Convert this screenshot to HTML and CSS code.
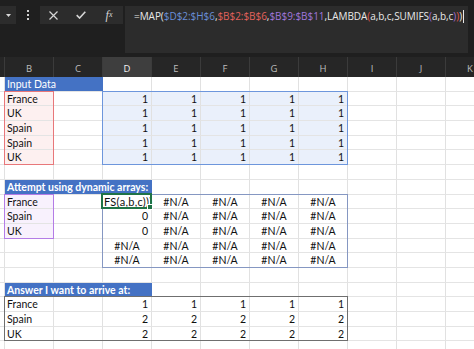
FILE: index.html
```html
<!DOCTYPE html>
<html>
<head>
<meta charset="utf-8">
<link rel="stylesheet" href="styles.css">
</head>
<body>
<div class="app">
  <div class="topbar">
    <div class="namebox"><svg width="5" height="3" viewBox="0 0 5 3"><path d="M0 0h5L2.5 3z" fill="#d8d8d8"/></svg></div>
    <div class="dots"><i></i><i></i><i></i></div>
    <div class="cmds">
      <span class="slot"><svg width="9" height="9" viewBox="0 0 9 9"><path d="M0.5 0.5L8.5 8.5M8.5 0.5L0.5 8.5" stroke="#d6d6d6" stroke-width="1.2" fill="none"/></svg></span>
      <span class="slot"><svg width="10" height="8" viewBox="0 0 10 8"><path d="M0.7 4.2L3.6 7L9.3 0.8" stroke="#d6d6d6" stroke-width="1.6" fill="none"/></svg></span>
      <span class="slot fx"><i>f</i><sub>x</sub></span>
    </div>
    <div class="formula"><span>=MAP(</span><span class="rb">$D$2:$H$6</span>,<span class="rr">$B$2:$B$6</span>,<span class="rp">$B$9:$B$11</span>,LAMBDA<span class="pr">(</span>a,b,c,SUMIFS<span class="pp">(</span>a,b,c<span class="pp">)</span><span class="pr">)</span>)<span class="cursor"></span></div>
  </div>
  <div class="sheet">
    <div class="layer cells">
      <div class="h"></div><div class="h">B</div><div class="h">C</div><div class="h sel">D</div><div class="h">E</div><div class="h">F</div><div class="h">G</div><div class="h">H</div><div class="h">I</div><div class="h">J</div><div class="h">K</div>

      <div class="c"></div><div class="c title s2">Input Data</div><div class="c"></div><div class="c"></div><div class="c"></div><div class="c"></div><div class="c"></div><div class="c"></div><div class="c"></div><div class="c"></div>

      <div class="c"></div><div class="c fr">France</div><div class="c"></div><div class="c fb r">1</div><div class="c fb r">1</div><div class="c fb r">1</div><div class="c fb r">1</div><div class="c fb r">1</div><div class="c"></div><div class="c"></div><div class="c"></div>
      <div class="c"></div><div class="c fr">UK</div><div class="c"></div><div class="c fb r">1</div><div class="c fb r">1</div><div class="c fb r">1</div><div class="c fb r">1</div><div class="c fb r">1</div><div class="c"></div><div class="c"></div><div class="c"></div>
      <div class="c"></div><div class="c fr">Spain</div><div class="c"></div><div class="c fb r">1</div><div class="c fb r">1</div><div class="c fb r">1</div><div class="c fb r">1</div><div class="c fb r">1</div><div class="c"></div><div class="c"></div><div class="c"></div>
      <div class="c"></div><div class="c fr">Spain</div><div class="c"></div><div class="c fb r">1</div><div class="c fb r">1</div><div class="c fb r">1</div><div class="c fb r">1</div><div class="c fb r">1</div><div class="c"></div><div class="c"></div><div class="c"></div>
      <div class="c"></div><div class="c fr">UK</div><div class="c"></div><div class="c fb r">1</div><div class="c fb r">1</div><div class="c fb r">1</div><div class="c fb r">1</div><div class="c fb r">1</div><div class="c"></div><div class="c"></div><div class="c"></div>

      <div class="c"></div><div class="c"></div><div class="c"></div><div class="c"></div><div class="c"></div><div class="c"></div><div class="c"></div><div class="c"></div><div class="c"></div><div class="c"></div><div class="c"></div>

      <div class="c"></div><div class="c title bold s3">Attempt using dynamic arrays:</div><div class="c"></div><div class="c"></div><div class="c"></div><div class="c"></div><div class="c"></div><div class="c"></div><div class="c"></div>

      <div class="c"></div><div class="c fp">France</div><div class="c"></div><div class="c edit">FS(a,b,c)))</div><div class="c m">#N/A</div><div class="c m">#N/A</div><div class="c m">#N/A</div><div class="c m">#N/A</div><div class="c"></div><div class="c"></div><div class="c"></div>
      <div class="c"></div><div class="c fp">Spain</div><div class="c"></div><div class="c r">0</div><div class="c m">#N/A</div><div class="c m">#N/A</div><div class="c m">#N/A</div><div class="c m">#N/A</div><div class="c"></div><div class="c"></div><div class="c"></div>
      <div class="c"></div><div class="c fp">UK</div><div class="c"></div><div class="c r">0</div><div class="c m">#N/A</div><div class="c m">#N/A</div><div class="c m">#N/A</div><div class="c m">#N/A</div><div class="c"></div><div class="c"></div><div class="c"></div>
      <div class="c"></div><div class="c"></div><div class="c"></div><div class="c m">#N/A</div><div class="c m">#N/A</div><div class="c m">#N/A</div><div class="c m">#N/A</div><div class="c m">#N/A</div><div class="c"></div><div class="c"></div><div class="c"></div>
      <div class="c"></div><div class="c"></div><div class="c"></div><div class="c m">#N/A</div><div class="c m">#N/A</div><div class="c m">#N/A</div><div class="c m">#N/A</div><div class="c m">#N/A</div><div class="c"></div><div class="c"></div><div class="c"></div>

      <div class="c"></div><div class="c"></div><div class="c"></div><div class="c"></div><div class="c"></div><div class="c"></div><div class="c"></div><div class="c"></div><div class="c"></div><div class="c"></div><div class="c"></div>

      <div class="c"></div><div class="c title bold s3">Answer I want to arrive at:</div><div class="c"></div><div class="c"></div><div class="c"></div><div class="c"></div><div class="c"></div><div class="c"></div><div class="c"></div>

      <div class="c"></div><div class="c">France</div><div class="c"></div><div class="c r">1</div><div class="c r">1</div><div class="c r">1</div><div class="c r">1</div><div class="c r">1</div><div class="c"></div><div class="c"></div><div class="c"></div>
      <div class="c"></div><div class="c">Spain</div><div class="c"></div><div class="c r">2</div><div class="c r">2</div><div class="c r">2</div><div class="c r">2</div><div class="c r">2</div><div class="c"></div><div class="c"></div><div class="c"></div>
      <div class="c"></div><div class="c">UK</div><div class="c"></div><div class="c r">2</div><div class="c r">2</div><div class="c r">2</div><div class="c r">2</div><div class="c r">2</div><div class="c"></div><div class="c"></div><div class="c"></div>

      <div class="c"></div><div class="c"></div><div class="c"></div><div class="c"></div><div class="c"></div><div class="c"></div><div class="c"></div><div class="c"></div><div class="c"></div><div class="c"></div><div class="c"></div>
    </div>
    <div class="layer marks">
      <div class="mk rng-red"></div>
      <div class="mk rng-blue"></div>
      <div class="mk rng-purple"></div>
      <div class="mk spill"></div>
      <div class="mk answer"></div>
      <div class="mk active"></div>
    </div>
  </div>
</div>
</body>
</html>
```

FILE: styles.css
```css
html, body {
  margin: 0;
  padding: 0;
  background: #ffffff;
}
.app {
  width: 474px;
  height: 349px;
  overflow: hidden;
  background: #ffffff;
}
.topbar {
  height: 57px;
  box-sizing: border-box;
  padding-top: 6px;
  background: #1f1f1f;
  display: flex;
  align-items: flex-start;
}
.namebox {
  width: 16px;
  height: 18px;
  background: #2c2c2c;
  display: flex;
  align-items: center;
  justify-content: center;
}
.dots {
  width: 24px;
  height: 18px;
  display: flex;
  flex-direction: column;
  align-items: center;
  justify-content: center;
  gap: 2px;
}
.dots i {
  display: block;
  width: 2px;
  height: 2px;
  background: #cfcfcf;
}
.cmds {
  width: 83px;
  height: 18px;
  background: #2c2c2c;
  display: flex;
  align-items: center;
}
.slot {
  width: 27.6px;
  display: flex;
  align-items: center;
  justify-content: center;
}
.fx {
  font-family: "Liberation Serif", serif;
  color: #d6d6d6;
  font-size: 12px;
  line-height: 12px;
}
.fx sub {
  font-size: 8px;
  font-style: italic;
  vertical-align: -1px;
}
.formula {
  margin-left: 2px;
  width: 343px;
  height: 47px;
  box-sizing: border-box;
  padding: 3px 0 0 9px;
  background: #2c2c2c;
  color: #e8e8e8;
  font-family: "Open Sans", sans-serif;
  font-size: 10px;
  letter-spacing: -0.05px;
  line-height: 15px;
  white-space: nowrap;
  overflow: hidden;
}
.formula .rb { color: #6a8fd8; }
.formula .rr { color: #e2625c; }
.formula .rp { color: #a077dc; }
.formula .pr { color: #e0584e; }
.formula .pp { color: #a06bd6; }
.cursor {
  display: inline-block;
  width: 1px;
  height: 13px;
  background: #e8e8e8;
  vertical-align: -3px;
  margin-left: 1px;
}

.sheet {
  display: grid;
}
.layer {
  grid-area: 1 / 1;
  display: grid;
  grid-template-columns: 5px repeat(10, 49px);
  grid-template-rows: 20px repeat(19, 14.7px);
}
.h {
  background: #262626;
  border-right: 1px solid #3b3b3b;
  color: #bdbdbd;
  font-family: "Open Sans", sans-serif;
  font-size: 9.5px;
  line-height: 16px;
  padding-top: 4px;
  text-align: center;
  box-sizing: border-box;
}
.h.sel {
  background: #3e3e3e;
  color: #f0f0f0;
}
.c {
  box-sizing: border-box;
  border-right: 1px solid #e1e1e1;
  border-bottom: 1px solid #e4e4e4;
  font-family: "Lato", sans-serif;
  font-size: 10.5px;
  line-height: 14px;
  color: #111111;
  padding: 0 2px;
  white-space: nowrap;
  overflow: hidden;
}
.r { text-align: right; padding-right: 3px; }
.m { text-align: center; }
.s2 { grid-column: span 2; }
.s3 { grid-column: span 3; }
.title {
  background: #4472c4;
  color: #ffffff;
  border-right-color: #4472c4;
}
.bold { font-weight: 700; }
.fr { background: #fdf0f0; }
.fb { background: #eaf0fb; }
.fp { background: #f8f1fd; }
.c.edit {
  padding-left: 1px;
  font-size: 11px;
  letter-spacing: 0.3px;
  overflow: visible;
}

.marks { pointer-events: none; }
.mk {
  margin: -1px 0 0 -1px;
  border: 1px solid transparent;
}
.rng-red { grid-row: 3 / 8; grid-column: 2 / 3; border-color: #e8777a; }
.rng-blue { grid-row: 3 / 8; grid-column: 4 / 9; border-color: #6d96dc; }
.rng-purple { grid-row: 10 / 13; grid-column: 2 / 3; border-color: #b47ce6; }
.spill { grid-row: 10 / 15; grid-column: 4 / 9; border-color: #8597c2; }
.answer { grid-row: 17 / 20; grid-column: 2 / 9; border-color: #6f6f6f; }
.active {
  grid-row: 10 / 11;
  grid-column: 4 / 5;
  border: 2px solid #1f7346;
  margin: -2px 0 0 -2px;
  position: relative;
}
.active::after {
  content: "";
  position: absolute;
  right: -3px;
  bottom: -3px;
  width: 4px;
  height: 4px;
  background: #1f7346;
  border: 1px solid #ffffff;
}
```
